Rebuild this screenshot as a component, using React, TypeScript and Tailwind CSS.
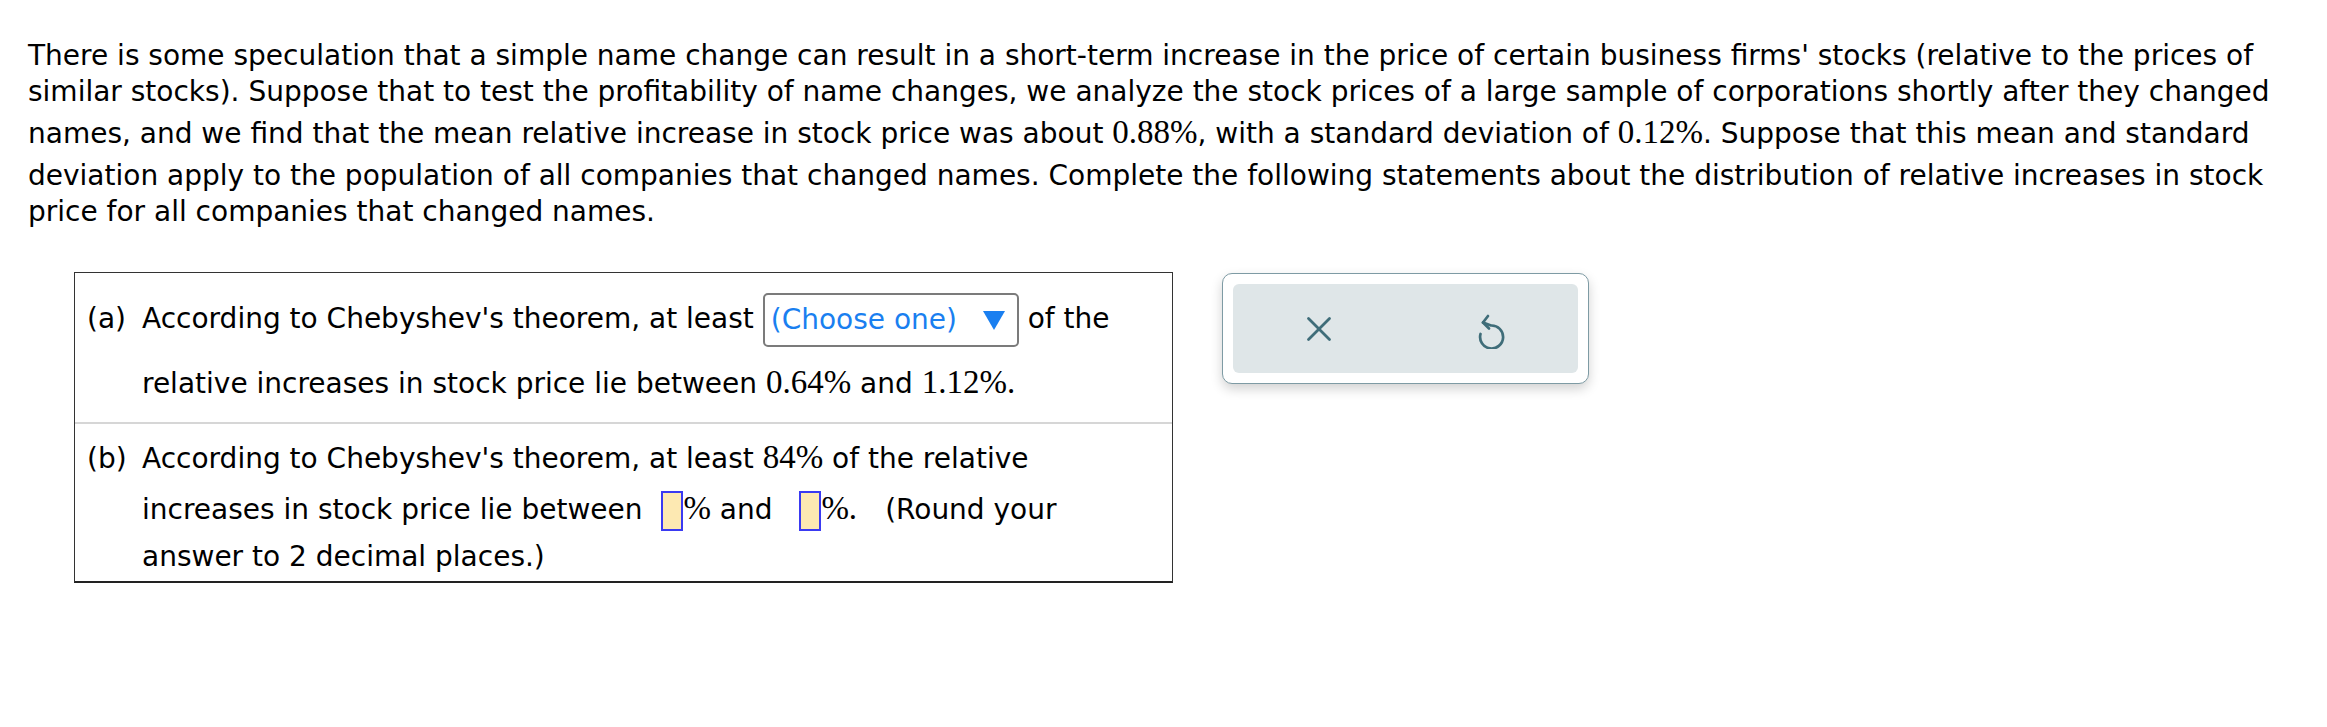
import React from 'react';

function M({ children }: { children: React.ReactNode }) {
  return (
    <span className="inline-block pt-[6px] pb-[9px] font-['Liberation_Serif',serif] text-[33px] leading-[33px]">
      {children}
    </span>
  );
}

function Blank({ className = '' }: { className?: string }) {
  return (
    <span
      className={`inline-block align-middle my-[8px] w-[22px] h-[40px] bg-[#fde9b2] border-2 border-[#3a3af2] ${className}`}
    />
  );
}

function UndoIcon() {
  return (
    <svg width="40" height="40" viewBox="11 9 40 40" fill="none" stroke="#3f6d79" strokeWidth="2.7" strokeLinecap="round" strokeLinejoin="round">
      <path d="M27 16 L22 22.5 L28 28.5" />
      <path d="M22 22.5 L30 25.5 A11.5 11.5 0 1 1 19.5 34" />
    </svg>
  );
}

function CloseIcon() {
  return (
    <svg width="40" height="40" viewBox="9 9 40 40" fill="none" stroke="#3f6d79" strokeWidth="2.8" strokeLinecap="round">
      <path d="M18.5 18.5 L39.5 39.5" />
      <path d="M39.5 18.5 L18.5 39.5" />
    </svg>
  );
}

export default function App() {
  return (
    <div className="min-h-screen bg-white text-black font-['DejaVu_Sans','Liberation_Sans',sans-serif] text-[28px] leading-[36px]">
      <p className="px-[28px] pt-[38px]">
        There is some speculation that a simple name change can result in a short-term increase in the price of
        certain business firms' stocks (relative to the prices of similar stocks). Suppose that to test the
        profitability of name changes, we analyze the stock prices of a large sample of corporations shortly after
        they changed names, and we find that the mean relative increase in stock price was about <M>0.88%</M>, with a
        standard deviation of <M>0.12%</M>. Suppose that this mean and standard deviation apply to the population of
        all companies that changed names. Complete the following statements about the distribution of relative
        increases in stock price for all companies that changed names.
      </p>

      <div className="mt-[42px] ml-[74px] flex items-start gap-[49px]">
        <div className="w-[1099px] border border-[#333] border-b-2 border-b-[#222]">
          <div className="flex items-baseline pl-[12px] pr-[22px] pt-[7px] pb-[14px]">
            <span className="w-[55px] shrink-0">(a)</span>
            <div className="flex-1">
              According to Chebyshev's theorem, at least{' '}
              <span className="inline-flex align-middle my-[13px] items-center justify-between w-[256px] h-[54px] pl-[6px] pr-[12px] border-2 border-[#7b7b7b] rounded-[5px] text-[#1a7ff0]">
                <span>(Choose one)</span>
                <svg width="22" height="19" viewBox="0 0 22 19">
                  <polygon points="0,0 22,0 11,19" fill="#1a7ff0" />
                </svg>
              </span>{' '}
              of the relative increases in stock price lie between <M>0.64%</M> and <M>1.12%.</M>
            </div>
          </div>
          <div className="flex items-baseline border-t-2 border-[#d6d6d6] pl-[12px] pr-[22px] pt-[11px] pb-[6px]">
            <span className="w-[55px] shrink-0">(b)</span>
            <div className="flex-1">
              According to Chebyshev's theorem, at least <M>84%</M> of the relative increases in stock price lie
              between <Blank className="ml-[10px]" />
              <M>%</M> and <Blank className="ml-[18px]" />
              <M>%.</M>
              <span className="ml-[28px]">(Round your answer to 2 decimal places.)</span>
            </div>
          </div>
        </div>

        <div className="mt-[1px] w-[367px] h-[111px] p-[10px] bg-white border-[1.5px] border-[#7e9ba4] rounded-[10px] shadow-[0_5px_12px_rgba(0,0,0,0.18)]">
          <div className="flex h-full bg-[#dfe6e8] rounded-[6px]">
            <div className="flex flex-1 items-center justify-center">
              <CloseIcon />
            </div>
            <div className="flex flex-1 items-center justify-center">
              <UndoIcon />
            </div>
          </div>
        </div>
      </div>
    </div>
  );
}
